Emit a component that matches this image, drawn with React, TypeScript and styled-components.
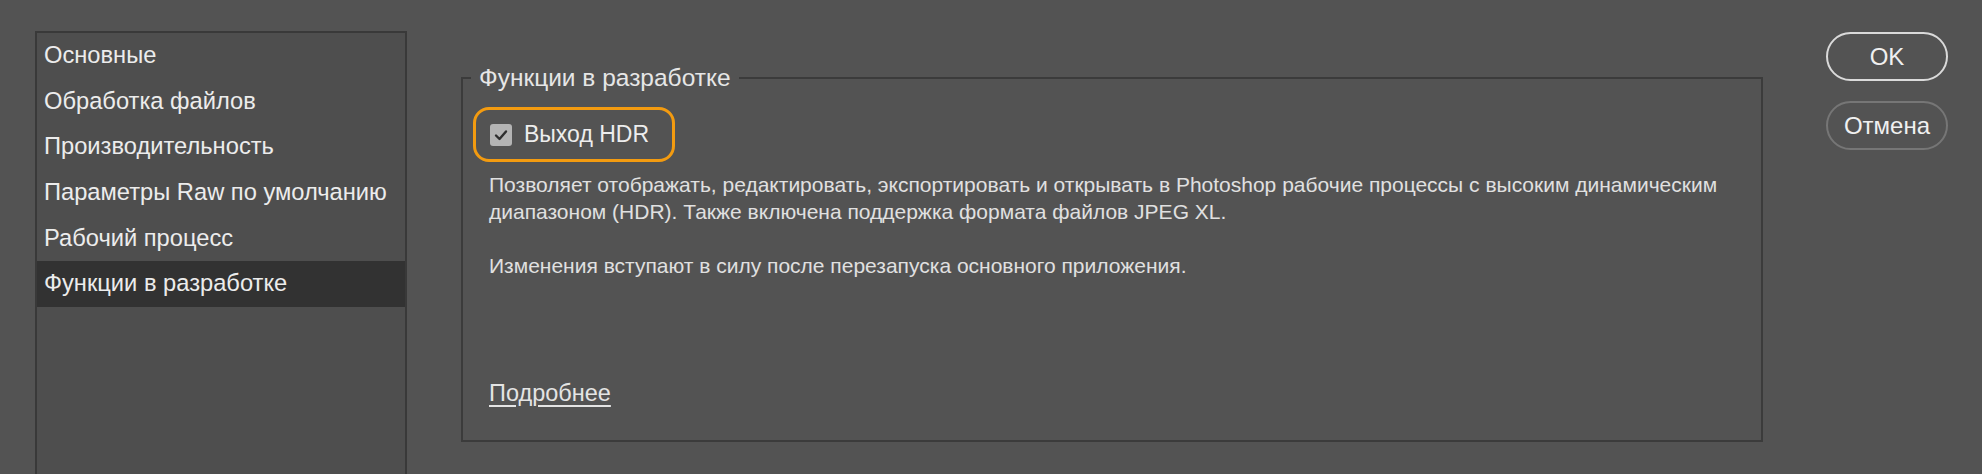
import styled, { createGlobalStyle } from 'styled-components'

const GlobalStyle = createGlobalStyle`
  html, body {
    margin: 0;
    padding: 0;
    background: #535353;
    overflow: hidden;
  }
  body {
    font-family: "Liberation Sans", Arial, sans-serif;
    color: #e8e8e8;
  }
`

const Page = styled.div`
  display: flex;
  height: 474px;
  padding: 31px 34px 0 35px;
  box-sizing: border-box;
  overflow: hidden;
`

const Sidebar = styled.ul`
  list-style: none;
  margin: 0;
  padding: 0;
  width: 372px;
  flex: none;
  box-sizing: border-box;
  background: #4e4e4e;
  border: 2px solid #393939;
  border-bottom: none;
`

const NavItem = styled.li<{ $active?: boolean }>`
  height: 45.6px;
  display: flex;
  align-items: center;
  padding-left: 7px;
  font-size: 23.7px;
  color: #ececec;
  background: ${({ $active }) => ($active ? '#323232' : 'transparent')};
`

const Main = styled.div`
  flex: 1;
  display: flex;
  align-items: flex-start;
  margin-left: 54px;
  padding-top: 32px;
`

const Group = styled.fieldset`
  margin: 0;
  padding: 0;
  width: 1302px;
  height: 379px;
  box-sizing: border-box;
  border: 2px solid #3b3b3b;
  min-width: 0;
`

const Legend = styled.legend`
  margin-left: 8px;
  padding: 0 8px;
  font-size: 24.5px;
  line-height: 30px;
  color: #e6e6e6;
`

const GroupBody = styled.div`
  display: flex;
  flex-direction: column;
  height: 347px;
  box-sizing: border-box;
  padding: 14px 0 33px 0;
`

const Highlight = styled.label`
  display: flex;
  align-items: center;
  gap: 12px;
  width: 202px;
  height: 55px;
  box-sizing: border-box;
  margin-left: 10px;
  padding-left: 14px;
  border: 3px solid #f39b10;
  border-radius: 16px;
  font-size: 23px;
  color: #ededed;
`

const Check = styled.span`
  width: 22px;
  height: 22px;
  border-radius: 3px;
  background: #b4b4b4;
  display: flex;
  align-items: center;
  justify-content: center;
`

const Description = styled.p`
  margin: 9px 0 0 26px;
  font-size: 21px;
  line-height: 27px;
  color: #e0e0e0;
  & + & {
    margin-top: 27px;
  }
`

const MoreLink = styled.a`
  margin: auto 0 0 26px;
  font-size: 23.5px;
  line-height: 27px;
  color: #e4e4e4;
  text-decoration: underline;
  text-underline-offset: 4px;
  align-self: flex-start;
`

const Buttons = styled.div`
  display: flex;
  flex-direction: column;
  gap: 20px;
  margin-left: auto;
  margin-top: -31px;
`

const Button = styled.button<{ $primary?: boolean }>`
  width: 122px;
  height: 49px;
  border-radius: 25px;
  background: transparent;
  border: 2px solid ${({ $primary }) => ($primary ? '#dadada' : '#767676')};
  color: #f0f0f0;
  font-family: "Liberation Sans", Arial, sans-serif;
  font-size: 24px;
  padding: 0;
`

const navItems = [
  'Основные',
  'Обработка файлов',
  'Производительность',
  'Параметры Raw по умолчанию',
  'Рабочий процесс',
  'Функции в разработке',
]

export default function App() {
  return (
    <>
      <GlobalStyle />
      <Page>
        <Sidebar>
          {navItems.map((item, i) => (
            <NavItem key={item} $active={i === navItems.length - 1}>
              {item}
            </NavItem>
          ))}
        </Sidebar>
        <Main>
          <Group>
            <Legend>Функции в разработке</Legend>
            <GroupBody>
              <Highlight>
                <Check>
                  <svg width="16" height="16" viewBox="0 0 16 16">
                    <path d="M3 8.5 L6.5 12 L13 4.5" fill="none" stroke="#2e2e2e" strokeWidth="2.4" strokeLinecap="round" strokeLinejoin="round" />
                  </svg>
                </Check>
                Выход HDR
              </Highlight>
              <Description>
                Позволяет отображать, редактировать, экспортировать и открывать в Photoshop рабочие процессы с высоким динамическим
                <br />
                диапазоном (HDR). Также включена поддержка формата файлов JPEG XL.
              </Description>
              <Description>Изменения вступают в силу после перезапуска основного приложения.</Description>
              <MoreLink href="#">Подробнее</MoreLink>
            </GroupBody>
          </Group>
          <Buttons>
            <Button $primary>OK</Button>
            <Button>Отмена</Button>
          </Buttons>
        </Main>
      </Page>
    </>
  )
}
